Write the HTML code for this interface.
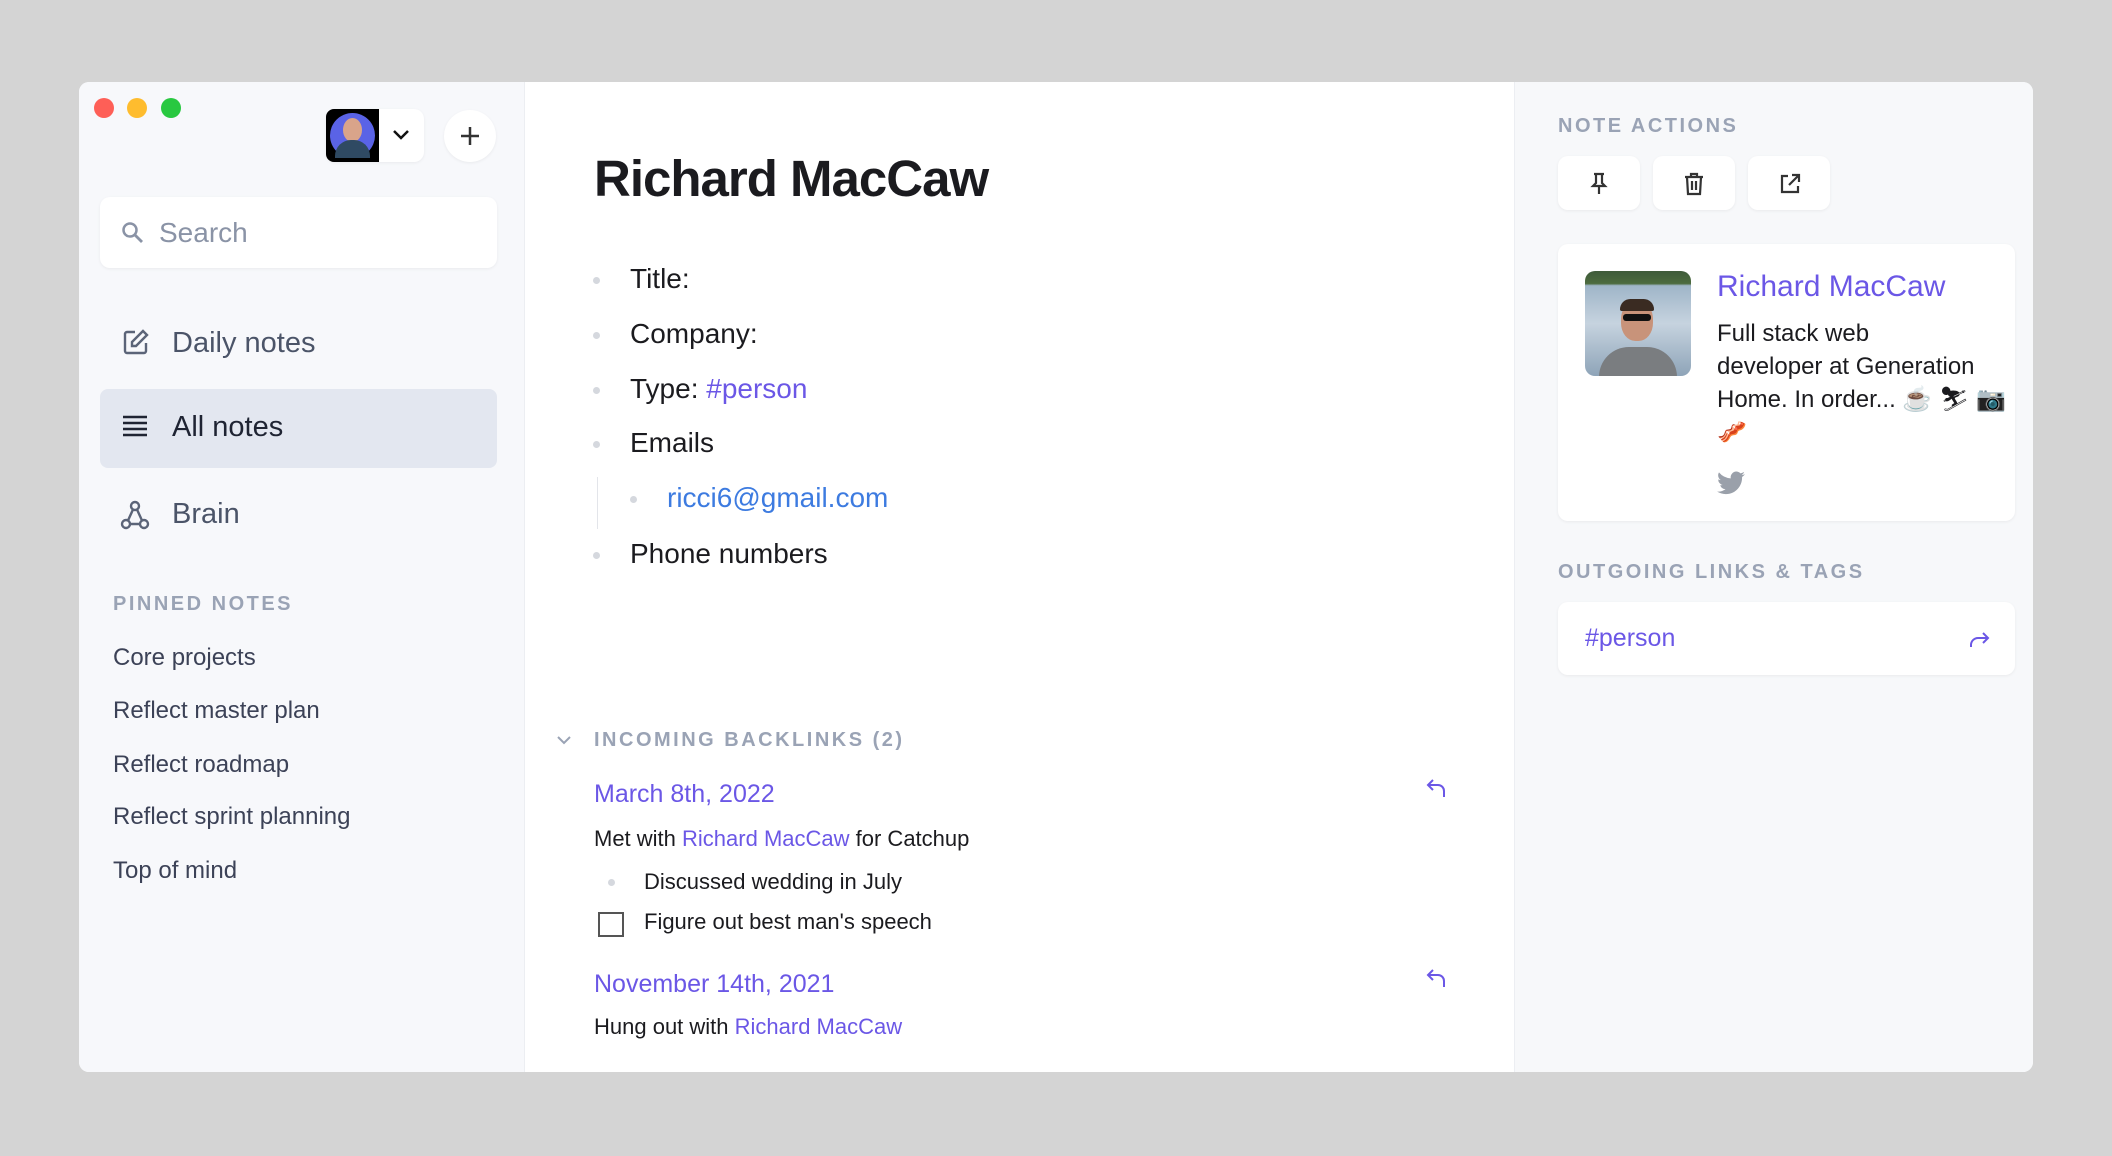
<!DOCTYPE html>
<html><head><meta charset="utf-8"><style>
*{margin:0;padding:0;box-sizing:border-box}
body{width:2112px;height:1156px;background:#d4d4d4;font-family:"Liberation Sans",sans-serif;position:relative;overflow:hidden}
.win{position:absolute;left:79px;top:82px;width:1954px;height:990px;border-radius:10px;overflow:hidden;background:#fff}
.side{position:absolute;left:0;top:0;width:446px;height:100%;background:#f7f8fb;border-right:1px solid #eceef2}
.right{position:absolute;left:1435px;top:0;width:519px;height:100%;background:#f7f8fa;border-left:1px solid #eceef2}
.a{position:absolute;white-space:nowrap}
.dot{position:absolute;width:20px;height:20px;border-radius:50%;top:16px}
.lbl{font-size:20px;letter-spacing:2.5px;color:#9aa3b5;font-weight:bold}
.pin{font-size:24px;color:#3c4257;left:34px}
.btn{position:absolute;background:#fff;border-radius:10px;box-shadow:0 1px 3px rgba(0,0,0,.06)}
.bul{position:absolute;width:7px;height:7px;border-radius:50%;background:#d5d8de}
.t{font-size:28px;color:#1b1b1f}
.p{color:#6b57e6}
.b{color:#3d7be0}
.s{font-size:22px;color:#1b1b1f}
</style></head><body>
<div class="win">
<div class="side">
<div class="dot" style="left:15px;background:#fe5f57"></div>
<div class="dot" style="left:48px;background:#febc2e"></div>
<div class="dot" style="left:82px;background:#28c840"></div>
<div class="btn" style="left:247px;top:27px;width:98px;height:53px"></div>
<div style="position:absolute;left:247px;top:27px;width:53px;height:53px;background:#000;border-radius:8px 0 0 8px"></div>
<div style="position:absolute;left:251px;top:31px;width:45px;height:45px;border-radius:50%;background:#5a63e6"></div>
<div style="position:absolute;left:264px;top:36px;width:19px;height:24px;border-radius:50%;background:#d9a48a"></div>
<div style="position:absolute;left:256px;top:58px;width:35px;height:18px;border-radius:16px 16px 0 0;background:#2f4a63"></div>
<svg class="a" style="left:312px;top:45px" width="20" height="16" viewBox="0 0 20 16"><path d="M3 4l7 7 7-7" stroke="#111" stroke-width="2.5" fill="none"/></svg>
<div class="btn" style="left:365px;top:28px;width:52px;height:52px;border-radius:50%"></div>
<svg class="a" style="left:380px;top:43px" width="22" height="22"><path d="M11 2v18M2 11h18" stroke="#333" stroke-width="2.5"/></svg>
<div class="btn" style="left:21px;top:115px;width:397px;height:71px"></div>
<svg class="a" style="left:42px;top:139px" width="24" height="24"><circle cx="9" cy="9" r="6.5" stroke="#8a93a6" stroke-width="2.5" fill="none"/><path d="M14 14l7 7" stroke="#8a93a6" stroke-width="2.8"/></svg>
<div class="a" style="left:80px;top:135px;font-size:28px;color:#8a93a6">Search</div>
<svg class="a" style="left:43px;top:246px" width="28" height="28" viewBox="0 0 28 28" fill="none" stroke="#5b6478" stroke-width="2.4"><path d="M13 4H5a2 2 0 0 0-2 2v17a2 2 0 0 0 2 2h17a2 2 0 0 0 2-2v-8"/><path d="M21 3l4 4-11 11H10v-4z"/></svg>
<div class="a" style="left:93px;top:245px;font-size:29px;color:#4b5468">Daily notes</div>
<div style="position:absolute;left:21px;top:307px;width:397px;height:79px;background:#e3e7f0;border-radius:8px"></div>
<svg class="a" style="left:43px;top:332px" width="26" height="24"><path d="M1 3h24M1 9h24M1 15h24M1 21h24" stroke="#1f2433" stroke-width="2.6"/></svg>
<div class="a" style="left:93px;top:329px;font-size:29px;color:#1f2433">All notes</div>
<svg class="a" style="left:41px;top:418px" width="30" height="30" viewBox="0 0 30 30" fill="none" stroke="#5b6478" stroke-width="2.4"><circle cx="15" cy="6" r="4"/><circle cx="6" cy="24" r="4"/><circle cx="24" cy="24" r="4"/><path d="M13 9.5L8 20.5M17 9.5l5 11M10 24h10"/></svg>
<div class="a" style="left:93px;top:416px;font-size:29px;color:#4b5468">Brain</div>
<div class="a lbl" style="left:34px;top:511px">PINNED NOTES</div>
<div class="a pin" style="top:562px">Core projects</div>
<div class="a pin" style="top:615px">Reflect master plan</div>
<div class="a pin" style="top:669px">Reflect roadmap</div>
<div class="a pin" style="top:721px">Reflect sprint planning</div>
<div class="a pin" style="top:775px">Top of mind</div>
</div>

<div class="a" style="left:515px;top:67px;font-size:51px;font-weight:bold;color:#1b1b1f;letter-spacing:-1px">Richard MacCaw</div>
<div class="bul" style="left:514px;top:195px"></div><div class="a t" style="left:551px;top:181px">Title:</div>
<div class="bul" style="left:514px;top:250px"></div><div class="a t" style="left:551px;top:236px">Company:</div>
<div class="bul" style="left:514px;top:305px"></div><div class="a t" style="left:551px;top:291px">Type: <span class="p">#person</span></div>
<div class="bul" style="left:514px;top:359px"></div><div class="a t" style="left:551px;top:345px">Emails</div>
<div style="position:absolute;left:518px;top:395px;width:1px;height:52px;background:#e3e5ea"></div>
<div class="bul" style="left:551px;top:414px"></div><div class="a t b" style="left:588px;top:400px">ricci6@gmail.com</div>
<div class="bul" style="left:514px;top:470px"></div><div class="a t" style="left:551px;top:456px">Phone numbers</div>

<svg class="a" style="left:477px;top:652px" width="16" height="12"><path d="M2 3l6 6 6-6" stroke="#9aa3b5" stroke-width="2" fill="none"/></svg>
<div class="a lbl" style="left:515px;top:647px">INCOMING BACKLINKS (2)</div>
<div class="a p" style="left:515px;top:698px;font-size:25px">March 8th, 2022</div>
<svg class="a" style="left:1347px;top:695px" width="22" height="22" viewBox="0 0 22 22" fill="none" stroke="#6b57e6" stroke-width="2"><path d="M7 3L2 8l5 5M2 8h10a6 6 0 0 1 6 6v6"/></svg>
<div class="a s" style="left:515px;top:744px">Met with <span class="p">Richard MacCaw</span> for Catchup</div>
<div class="bul" style="left:529px;top:797px"></div>
<div class="a s" style="left:565px;top:787px">Discussed wedding in July</div>
<div style="position:absolute;left:519px;top:830px;width:26px;height:25px;border:2px solid #555"></div>
<div class="a s" style="left:565px;top:827px">Figure out best man's speech</div>
<div class="a p" style="left:515px;top:888px;font-size:25px">November 14th, 2021</div>
<svg class="a" style="left:1347px;top:885px" width="22" height="22" viewBox="0 0 22 22" fill="none" stroke="#6b57e6" stroke-width="2"><path d="M7 3L2 8l5 5M2 8h10a6 6 0 0 1 6 6v6"/></svg>
<div class="a s" style="left:515px;top:932px">Hung out with <span class="p">Richard MacCaw</span></div>

<div class="right">
<div class="a lbl" style="left:43px;top:33px">NOTE ACTIONS</div>
<div class="btn" style="left:43px;top:74px;width:82px;height:54px"></div>
<div class="btn" style="left:138px;top:74px;width:82px;height:54px"></div>
<div class="btn" style="left:233px;top:74px;width:82px;height:54px"></div>
<svg class="a" style="left:74px;top:90px" width="20" height="24" viewBox="0 0 20 24" fill="none" stroke="#333" stroke-width="2.2"><path d="M5 2h10M7 2v9l-3 3h12l-3-3V2M10 14v8"/></svg>
<svg class="a" style="left:168px;top:90px" width="22" height="24" viewBox="0 0 22 24" fill="none" stroke="#333" stroke-width="2.2"><path d="M2 5h18M8 5V2h6v3M4 5l1 17h12l1-17M9 9v9M13 9v9"/></svg>
<svg class="a" style="left:263px;top:90px" width="24" height="24" viewBox="0 0 24 24" fill="none" stroke="#333" stroke-width="2.2"><path d="M10 4H4v16h16v-6M14 3h7v7M21 3L11 13"/></svg>
<div class="btn" style="left:43px;top:162px;width:457px;height:277px"></div>
<div style="position:absolute;left:70px;top:189px;width:106px;height:105px;border-radius:10px;overflow:hidden;background:linear-gradient(#3e5a3a 0,#4c6b3e 12%,#9fb5c8 14%,#c6d3df 50%,#8ea4b8 100%)">
<div style="position:absolute;left:36px;top:30px;width:32px;height:40px;border-radius:45%;background:#c8937a"></div>
<div style="position:absolute;left:35px;top:28px;width:34px;height:12px;border-radius:12px 12px 2px 2px;background:#3a2b22"></div>
<div style="position:absolute;left:38px;top:43px;width:28px;height:7px;background:#111;border-radius:3px"></div>
<div style="position:absolute;left:14px;top:76px;width:78px;height:34px;border-radius:30px 30px 0 0;background:#7a7d80"></div>
</div>
<div class="a p" style="left:202px;top:188px;font-size:30px">Richard MacCaw</div>
<div class="a" style="left:202px;top:235px;font-size:24px;line-height:33px;color:#1b1b1f">Full stack web<br>developer at Generation<br>Home. In order... ☕ ⛷ 📷<br>🥓</div>
<svg class="a" style="left:202px;top:389px" width="28" height="24" viewBox="0 0 24 20"><path fill="#9aa0aa" d="M24 2.4a9.8 9.8 0 0 1-2.8.8A4.9 4.9 0 0 0 23.3.5a9.9 9.9 0 0 1-3.1 1.2A4.9 4.9 0 0 0 11.8 6 14 14 0 0 1 1.7.9a4.9 4.9 0 0 0 1.5 6.6A4.9 4.9 0 0 1 1 6.9a4.9 4.9 0 0 0 3.9 4.8 4.9 4.9 0 0 1-2.2.1 4.9 4.9 0 0 0 4.6 3.4A9.9 9.9 0 0 1 0 17.3 14 14 0 0 0 7.5 19.5c9.1 0 14-7.5 14-14v-.6A10 10 0 0 0 24 2.4z"/></svg>
<div class="a lbl" style="left:43px;top:479px">OUTGOING LINKS &amp; TAGS</div>
<div class="btn" style="left:43px;top:520px;width:457px;height:73px"></div>
<div class="a p" style="left:70px;top:542px;font-size:25px">#person</div>
<svg class="a" style="left:453px;top:548px" width="22" height="20" viewBox="0 0 22 20" fill="none" stroke="#6b57e6" stroke-width="2"><path d="M15 3l5 5-5 5M20 8H10a7 7 0 0 0-7 7v2"/></svg>
</div>
</div>
</body></html>
